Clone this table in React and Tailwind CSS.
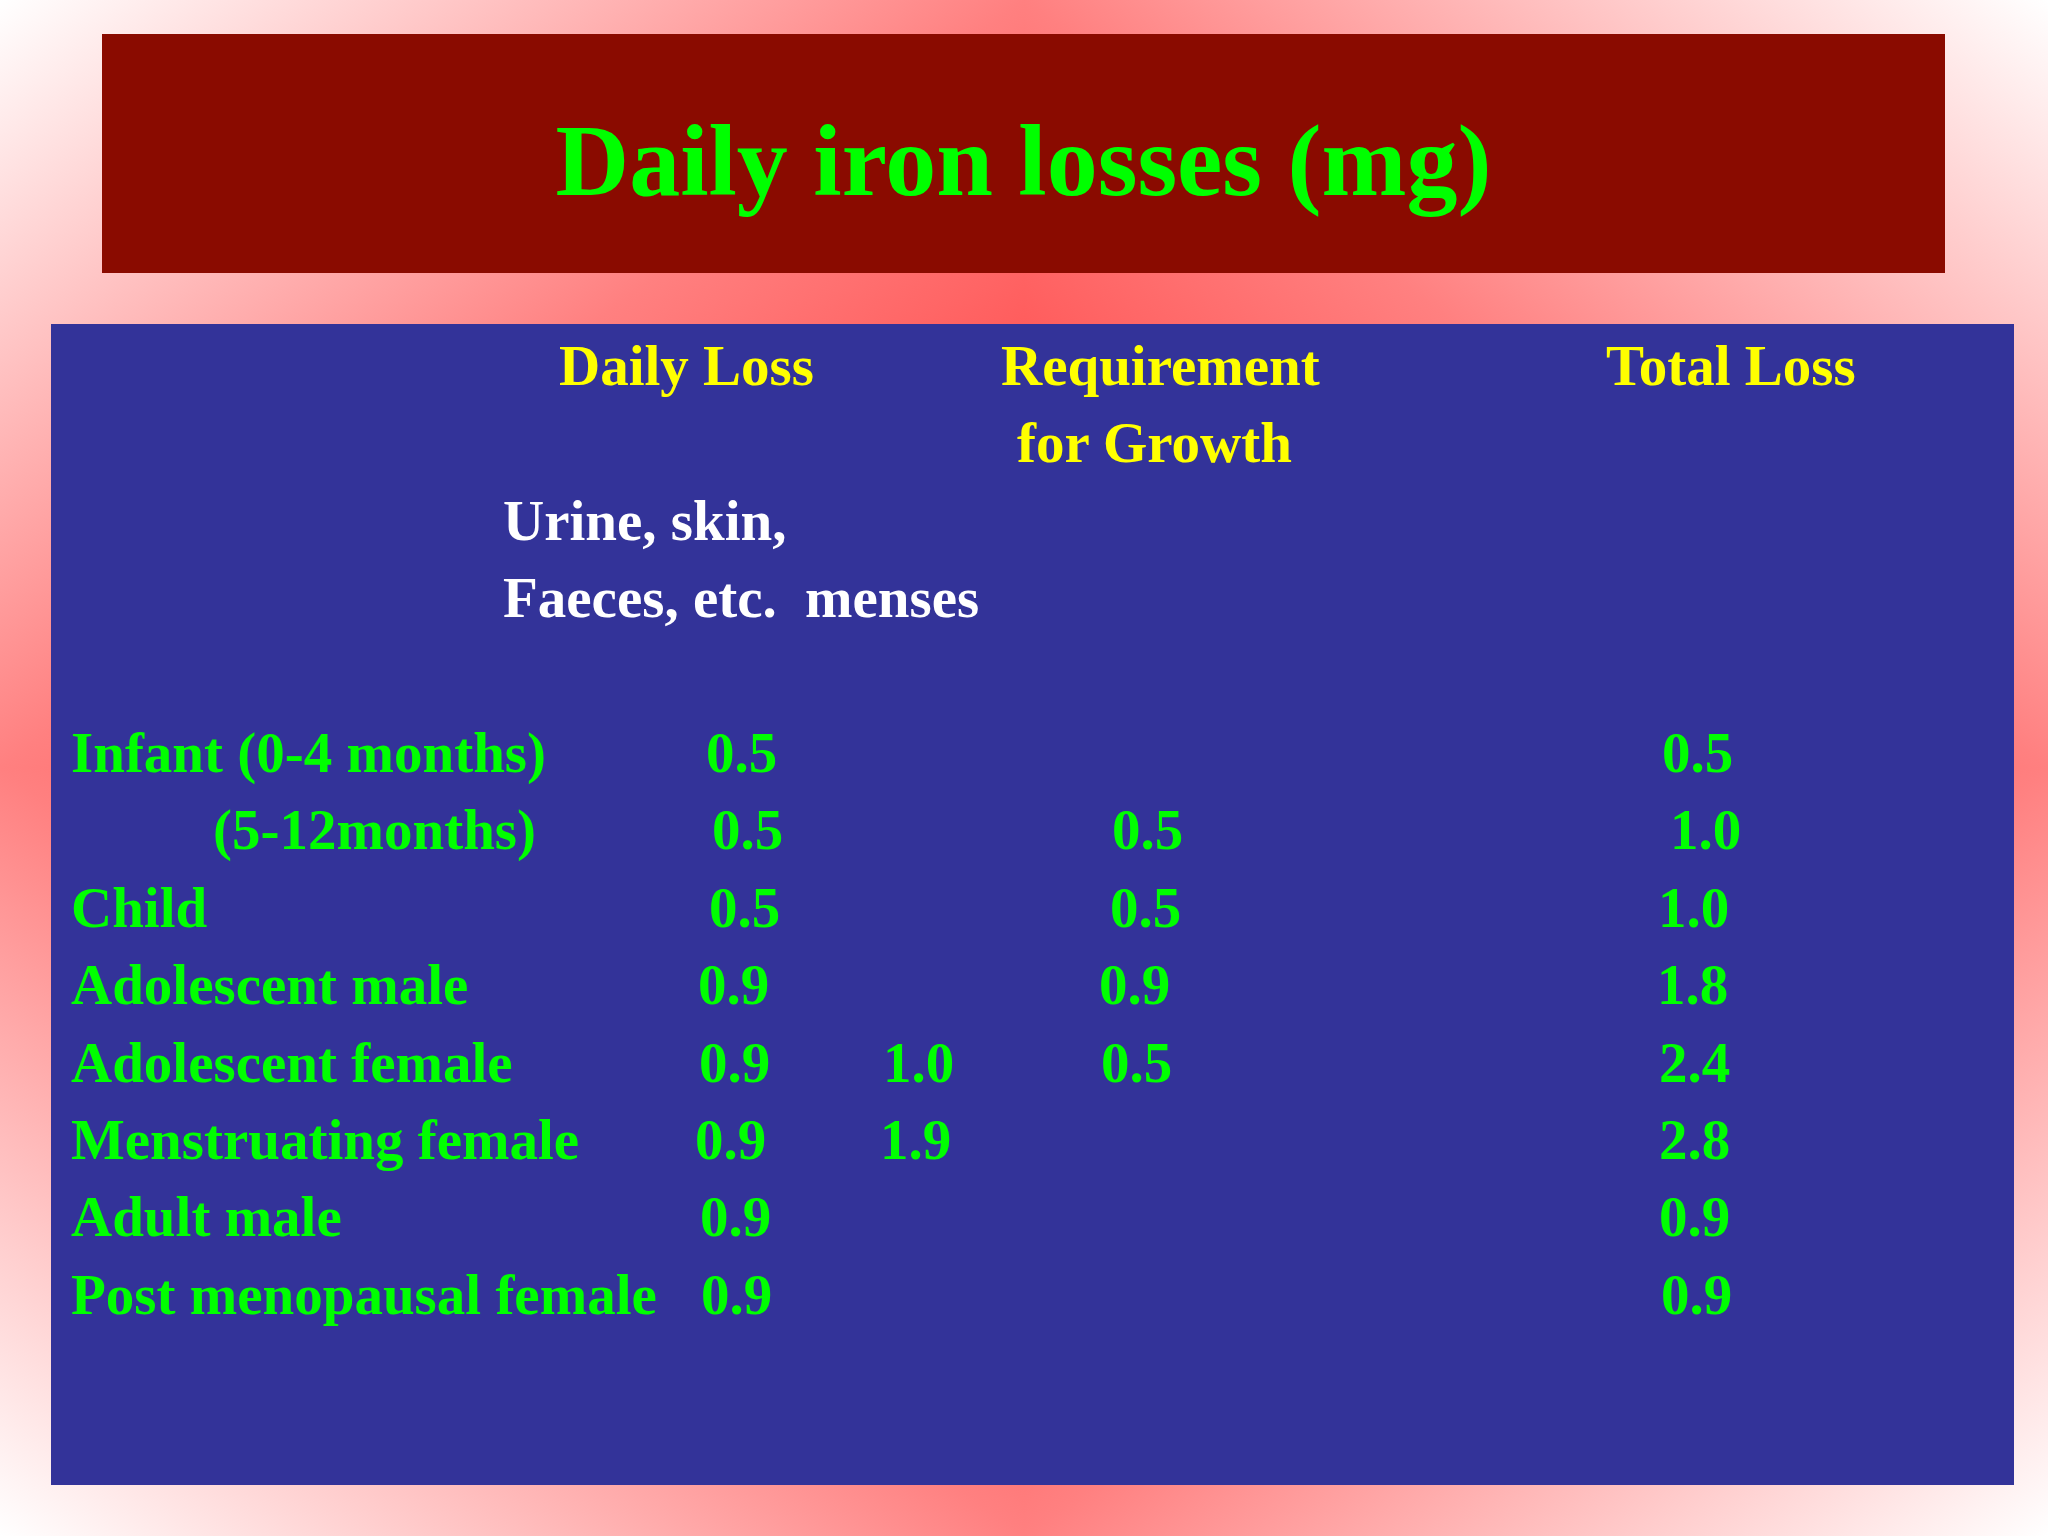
import React from 'react';

// Rows of the iron-loss table: label, daily loss, menses, growth, total
// off* = small nudges so each figure lands where the slide put it
const rows = [
  { label: 'Infant (0-4 months)', a: '0.5', offA: 'pl-[11px]', d: '0.5', offD: 'pl-[9px]' },
  { label: '(5-12months)', indent: true, a: '0.5', offA: 'pl-[17px]', c: '0.5', offC: 'pl-[17px]', d: '1.0', offD: 'pl-[17px]' },
  { label: 'Child', a: '0.5', offA: 'pl-[14px]', c: '0.5', offC: 'pl-[15px]', d: '1.0', offD: 'pl-[5px]' },
  { label: 'Adolescent male', a: '0.9', offA: 'pl-[3px]', c: '0.9', offC: 'pl-[4px]', d: '1.8', offD: 'pl-[4px]' },
  { label: 'Adolescent female', a: '0.9', offA: 'pl-[4px]', b: '1.0', offB: 'pl-[8px]', c: '0.5', offC: 'pl-[6px]', d: '2.4', offD: 'pl-[6px]' },
  { label: 'Menstruating female', a: '0.9', offA: 'pl-0', b: '1.9', offB: 'pl-[5px]', d: '2.8', offD: 'pl-[6px]' },
  { label: 'Adult male', a: '0.9', offA: 'pl-[5px]', d: '0.9', offD: 'pl-[6px]' },
  { label: 'Post menopausal female', a: '0.9', offA: 'pl-[6px]', d: '0.9', offD: 'pl-[8px]' }
];

const DataRow = ({ row }) => (
  <div className="grid grid-cols-[644px_180px_220px_558px_1fr] h-[77.4px] text-[#00ff00] whitespace-nowrap">
    <span className={row.indent ? 'pl-[162px]' : 'pl-[20px]'}>{row.label}</span>
    <span className={row.offA}>{row.a}</span>
    <span className={row.offB || ''}>{row.b || ''}</span>
    <span className={row.offC || ''}>{row.c || ''}</span>
    <span className={row.offD}>{row.d}</span>
  </div>
);

export default function App() {
  return (
    // slide background: "from centre" gradient, red in the middle, white in the corners
    <div className="w-[2048px] h-[1536px] overflow-hidden flex flex-col [background-image:linear-gradient(to_top_left,#ff2d2d,#ff8080_50%,#ffffff),linear-gradient(to_top_right,#ff2d2d,#ff8080_50%,#ffffff),linear-gradient(to_bottom_left,#ff2d2d,#ff8080_50%,#ffffff),linear-gradient(to_bottom_right,#ff2d2d,#ff8080_50%,#ffffff)] [background-size:50%_50%] [background-position:0_0,100%_0,0_100%,100%_100%] bg-no-repeat font-['Liberation_Serif','Times_New_Roman',serif] font-bold">
      {/* Title bar */}
      <div className="ml-[102px] mt-[34px] w-[1843px] h-[239px] shrink-0 bg-[#8a0b00] pt-[76px] text-center">
        <h1 className="text-[102px] leading-none text-[#00ff00] whitespace-nowrap">Daily iron losses (mg)</h1>
      </div>

      {/* Table panel */}
      <div className="ml-[51px] mt-[51px] w-[1963px] h-[1161px] shrink-0 bg-[#333399] pt-[3px] text-[57px] leading-[77.4px]">
        <div className="flex h-[77.4px] text-[#ffff00] whitespace-nowrap">
          <span className="w-[950px] shrink-0 pl-[508px]">Daily Loss</span>
          <span className="w-[605px] shrink-0">Requirement</span>
          <span>Total Loss</span>
        </div>
        <div className="flex h-[77.4px] text-[#ffff00] whitespace-nowrap">
          <span className="pl-[966px]">for Growth</span>
        </div>
        <div className="flex h-[77.4px] text-white whitespace-nowrap">
          <span className="pl-[452px]">Urine, skin,</span>
        </div>
        <div className="flex h-[77.4px] text-white whitespace-nowrap">
          <span className="w-[754px] shrink-0 pl-[452px]">Faeces, etc.</span>
          <span>menses</span>
        </div>
        <div className="h-[77.4px]" />

        {rows.map((row, i) => (
          <DataRow key={i} row={row} />
        ))}
      </div>
    </div>
  );
}
